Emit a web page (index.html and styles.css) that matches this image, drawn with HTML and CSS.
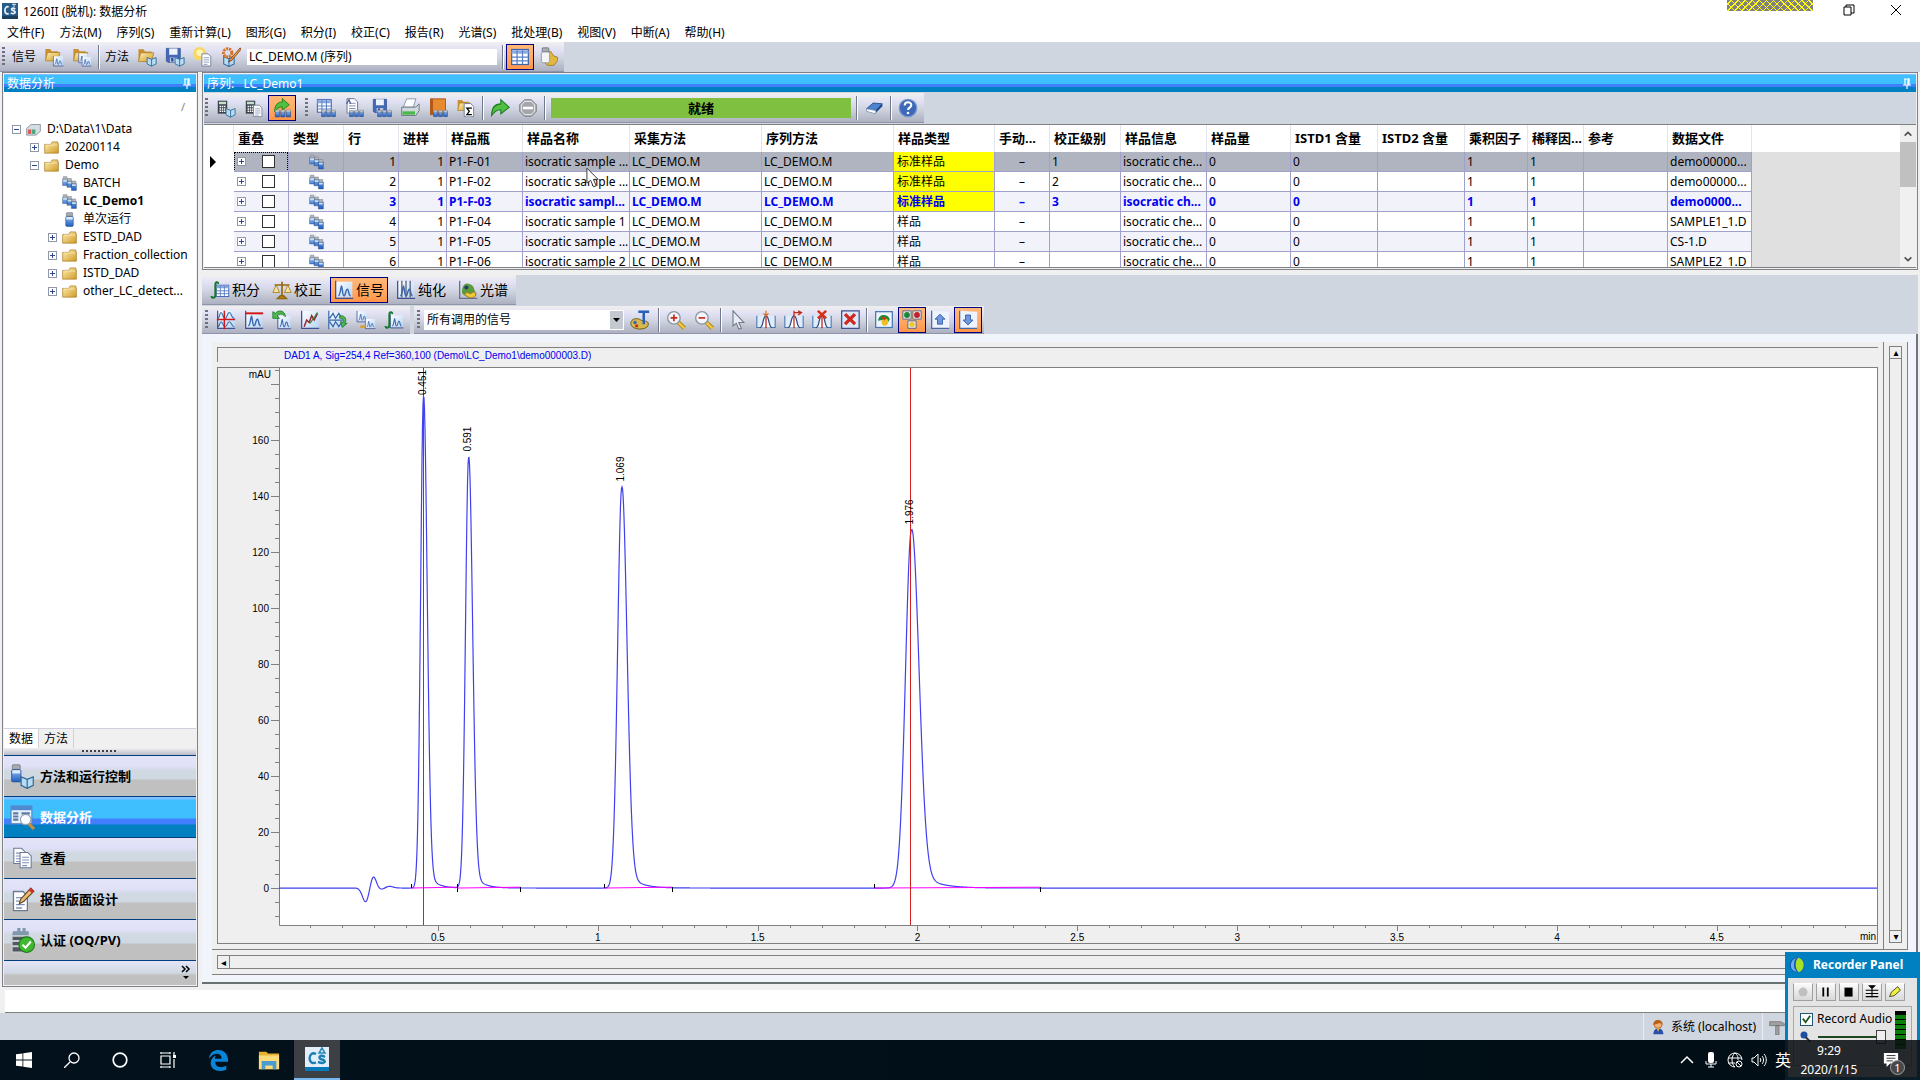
FILE: index.html
```html
<!DOCTYPE html>
<html lang="zh-CN">
  <head>
    <meta charset="UTF-8" />
    <meta name="viewport" content="width=device-width, initial-scale=1.0" />
    <title>1260II (脱机): 数据分析</title>
    <link rel="stylesheet" href="styles.css">
  </head>

  <body>
    <!-- shared icon shapes -->
    <svg class="sprite" aria-hidden="true">
      <defs>
        <linearGradient id="gFolder" x1="0" y1="0" x2="1" y2="1"><stop offset="0" stop-color="#fff0b0" /><stop offset="1" stop-color="#d09a28" /></linearGradient>
        <linearGradient id="gBlue" x1="0" y1="0" x2="0" y2="1"><stop offset="0" stop-color="#8fb8f0" /><stop offset="1" stop-color="#1f5fc0" /></linearGradient>
        <linearGradient id="gChart" x1="0" y1="0" x2="1" y2="1"><stop offset="0" stop-color="#ffffff" /><stop offset="1" stop-color="#b8d4f4" /></linearGradient>
      </defs>
      <symbol id="folder" viewBox="0 0 24 24"><path d="M2 3h7l2 3h9v12H2z" fill="#c89030" /><path d="M2 20 5 8h18l-3 12z" fill="url(#gFolder)" stroke="#a87820" /></symbol>
      <symbol id="folder-plain" viewBox="0 0 24 24"><path d="M1 7h10l2-4h9v3h1v15H1z" fill="url(#gFolder)" stroke="#a07018" /><path d="M3 8h18" stroke="#fff4c8" /></symbol>
      <symbol id="chart" viewBox="0 0 24 24"><rect x="2" y="2" width="20" height="19" fill="url(#gChart)" /><path d="M2 1v21h21" fill="none" stroke="#405090" stroke-width="1.500" /><path d="M5 19c3 0 3-12 4-12s1 12 3 12 2-8 4-8 1 8 4 8" fill="none" stroke="#3868b0" stroke-width="1.700" /></symbol>
      <symbol id="vial" viewBox="0 0 24 24"><rect x="7" y="1" width="10" height="6" rx="1" fill="#a8acb0" stroke="#70757c" /><rect x="6" y="7" width="12" height="16" rx="2" fill="url(#gBlue)" stroke="#30508c" /><path d="M7 8h10v4H7z" fill="#dce8f4" /></symbol>
      <symbol id="vials" viewBox="0 0 24 24"><g stroke="#36558c" stroke-width=".8"><path d="M1 5h8v10H1zM8 8h8v10H8zM15 12h8v11h-8z" fill="url(#gBlue)" /><path d="M2 1h6v4H2zM9 4h6v4H9zM16 8h6v4h-6z" fill="#b4b8ba" stroke="#777c80" /></g><path d="M2 6h6v3H2zM9 9h6v3H9zM16 13h6v3h-6z" fill="#c8dcf0" /></symbol>
      <symbol id="vial-row" viewBox="0 0 24 12"><path d="M1 3h6v8H1zM9 3h6v8H9zM17 3h6v8h-6z" fill="url(#gBlue)" stroke="#2a4c8c" /><path d="M1 1h6v3H1zM9 1h6v3H9zM17 1h6v3h-6z" fill="#cdd3da" stroke="#6a7480" stroke-width=".7" /></symbol>
      <symbol id="book" viewBox="0 0 24 24"><path d="M2 4l10 4 10-4v14l-10 5L2 18z" fill="#b8dcf4" stroke="#2f6a98" stroke-width="2" /><path d="M12 8v15" stroke="#2f6a98" stroke-width="2" /></symbol>
      <symbol id="page" viewBox="0 0 24 24"><path d="M4 1h11l5 5v17H4z" fill="#fff" stroke="#6a7894" stroke-width="1.5" /><path d="M7 8h10M7 12h10M7 16h10M7 20h7" stroke="#8090b8" stroke-width="1.5" /></symbol>
      <symbol id="disk" viewBox="0 0 24 24"><path d="M2 2h20v20H4l-2-2z" fill="#4468b8" stroke="#28448c" /><path d="M6 2h12v9H6z" fill="#eef2fa" /><path d="M7 15h10v7H7z" fill="#b8c4dc" /><path d="M9 16h3v5H9z" fill="#28448c" /></symbol>
      <symbol id="calc" viewBox="0 0 24 24"><rect x="3" y="1" width="16" height="22" fill="#3c4450" /><path d="M5 3h12v4H5z" fill="#c4e0c8" /><path d="M6 11h10M6 15h10M6 19h10" stroke="#fff" stroke-width="2.4" stroke-dasharray="2.6 1.2" /></symbol>
      <symbol id="table" viewBox="0 0 24 24"><rect x="2" y="3" width="20" height="18" fill="#fff" stroke="#3c62b0" stroke-width="1.5" /><path d="M2 4h20v4H2z" fill="#88a8e0" /><path d="M2 12h20M2 16.500h20M8.500 4v17M15 4v17" stroke="#5c80c4" stroke-width="1.5" /></symbol>
      <symbol id="integral" viewBox="0 0 12 24"><path d="M11 4C11 1 7 1 7 5v14c0 4-5 4-5 1" fill="none" stroke="#16782c" stroke-width="2.6" /></symbol>
      <symbol id="swoosh" viewBox="0 0 24 24"><path d="M2 21C2 11 7 7 13 7V2l10 9-10 8v-5c-5 0-8 2-11 7z" fill="#50c040" stroke="#1c7c20" stroke-width="1.3" /></symbol>
      <symbol id="lens" viewBox="0 0 24 24"><path d="M15 15l7 7" stroke="#a87a10" stroke-width="5" /><path d="M15 15l7 7" stroke="#f0c840" stroke-width="3" /><circle cx="9.500" cy="9.500" r="7.500" fill="#f2f6fc" stroke="#8c94a0" stroke-width="1.600" /></symbol>
      <symbol id="pin" viewBox="0 0 12 12"><path d="M3 1h6M4 1v6M8 1v6M7 1v6M2 7h8M6 7v4" fill="none" stroke="#fff" stroke-width="1.200" /></symbol>
      <symbol id="cs" viewBox="0 0 24 24"><rect width="24" height="24" fill="#e4eef8" /><path d="M0 20h24v4H0z" fill="#0878b8" /><path d="M17 1l-3 5h6z" fill="none" stroke="#2888b8" stroke-width="1.500" /><path d="M11 7C3 3 2 19 11 15.500M20 10c-5-3-8 1-3 2.500s3 5-4 2.500" fill="none" stroke="#1880b4" stroke-width="2.400" /></symbol>
      <symbol id="cs-small" viewBox="0 0 24 24"><rect width="24" height="24" fill="#285c88" /><path d="M0 19h24v5H0z" fill="#184060" /><path d="M15 2h6M18 1v5" stroke="#c8e0f0" stroke-width="1.500" /><path d="M10 6C3 3 2 19 10 16M20 9c-5-3-8 1-3 2.500s3 6-4 3.500" fill="none" stroke="#e4f0f8" stroke-width="2.600" /></symbol>
      <symbol id="book-vials" viewBox="0 0 24 24"><path d="M3 1h18v19H3z" fill="#e88a30" stroke="#a04c10" /><path d="M3 1h3v19H3z" fill="#b85818" /><use href="#vial-row" x="6" y="13" width="18" height="11" /></symbol>
    </svg>

    <header class="titlebar">
      <svg class="app-icon"><use href="#cs-small" /></svg>
      <span>1260II (脱机): 数据分析</span>
      <i class="hatch"></i>
      <button class="win-btn" aria-label="还原"><svg viewBox="0 0 12 12"><path d="M1 3h7v8H1zM3 3V1h8v8H8" fill="none" stroke="#000" /></svg></button>
      <button class="win-btn" aria-label="关闭"><svg viewBox="0 0 12 12"><path d="M1 1l10 10M11 1L1 11" fill="none" stroke="#000" /></svg></button>
    </header>

    <nav class="menubar">
      <button>文件(F)</button><button>方法(M)</button><button>序列(S)</button><button>重新计算(L)</button><button>图形(G)</button><button>积分(I)</button><button>校正(C)</button><button>报告(R)</button><button>光谱(S)</button><button>批处理(B)</button><button>视图(V)</button><button>中断(A)</button><button>帮助(H)</button>
    </nav>

    <div class="toolrow main-tools">
      <div class="toolbar">
        <i class="grip"></i>
        <span class="tool-label">信号</span>
        <button class="tool" aria-label="调用信号"><svg viewBox="0 0 24 24"><use href="#folder" width="20" height="20" /><use href="#chart" x="10" y="10" width="14" height="14" /></svg></button>
        <button class="tool" aria-label="叠加信号"><svg viewBox="0 0 24 24"><use href="#folder" width="20" height="20" /><use href="#chart" x="7" y="7" width="13" height="13" /><use href="#chart" x="11" y="11" width="13" height="13" /></svg></button>
        <i class="sep"></i>
        <span class="tool-label">方法</span>
        <button class="tool" aria-label="调用方法"><svg viewBox="0 0 24 24"><use href="#folder" width="21" height="21" /><use href="#book" x="11" y="10" width="13" height="14" /></svg></button>
        <button class="tool" aria-label="保存方法"><svg viewBox="0 0 24 24"><use href="#disk" width="20" height="20" /><use href="#book" x="11" y="10" width="13" height="14" /></svg></button>
        <button class="tool" aria-label="新建方法"><svg viewBox="0 0 24 24"><circle cx="8" cy="8" r="8" fill="#f8d860" /><circle cx="8" cy="7" r="4" fill="#fff4b8" /><use href="#page" x="8" y="7" width="16" height="17" /></svg></button>
        <button class="tool" aria-label="编辑方法"><svg viewBox="0 0 24 24"><use href="#book" x="1" y="9" width="17" height="15" /><circle cx="8" cy="7" r="5" fill="none" stroke="#d87020" stroke-width="3.500" stroke-dasharray="2.500 1" /><path d="M23 1L11 15l-2 3 4-2L24 3z" fill="#f0a840" stroke="#803810" /></svg></button>
        <input class="method-name" type="text" aria-label="当前方法" value="LC_DEMO.M (序列)" />
        <i class="sep"></i>
        <button class="tool active" aria-label="序列表"><svg><use href="#table" /></svg></button>
        <button class="tool" aria-label="单次运行"><svg viewBox="0 0 24 24"><path d="M9 8l6-3 4 6 4 1 1 4-5 6h-8l-5-6z" fill="#e4b840" stroke="#a07818" /><rect x="5" y="1" width="8" height="5" rx="1" fill="#a8acb0" stroke="#70757c" /><rect x="4" y="6" width="10" height="13" rx="2" fill="#f2f4f8" stroke="#8890a0" /></svg></button>
      </div>
    </div>

    <main class="workspace">
      <aside class="panel side">
        <h2 class="panel-title">数据分析<svg><use href="#pin" /></svg></h2>
        <div class="side-path">/</div>
        <ul class="tree">
          <li><button class="twist open" aria-label="折叠"></button><svg viewBox="0 0 24 24"><path d="M1 10l7-6h15v11l-7 6H1z" fill="#d4dce4" stroke="#60707c" /><path d="M3 12h5v7H3z" fill="#e05858" /><path d="M9 12h6v7H9z" fill="#44a878" /></svg>D:\Data\1\Data</li>
          <li class="lv1"><button class="twist" aria-label="展开"></button><svg><use href="#folder-plain" /></svg>20200114</li>
          <li class="lv1"><button class="twist open" aria-label="折叠"></button><svg><use href="#folder-plain" /></svg>Demo</li>
          <li class="lv2 leaf"><svg><use href="#vials" /></svg>BATCH</li>
          <li class="lv2 leaf current"><svg><use href="#vials" /></svg>LC_Demo1</li>
          <li class="lv2 leaf"><svg><use href="#vial" /></svg>单次运行</li>
          <li class="lv2"><button class="twist" aria-label="展开"></button><svg><use href="#folder-plain" /></svg>ESTD_DAD</li>
          <li class="lv2"><button class="twist" aria-label="展开"></button><svg><use href="#folder-plain" /></svg>Fraction_collection</li>
          <li class="lv2"><button class="twist" aria-label="展开"></button><svg><use href="#folder-plain" /></svg>ISTD_DAD</li>
          <li class="lv2"><button class="twist" aria-label="展开"></button><svg><use href="#folder-plain" /></svg>other_LC_detect...</li>
        </ul>
        <div class="side-tabs"><button class="on">数据</button><button>方法</button></div>
        <div class="side-grip"></div>
        <nav class="views">
          <button><svg viewBox="0 0 24 24"><use href="#vial" x="-3" y="0" width="18" height="18" /><use href="#book" x="9" y="10" width="15" height="14" /></svg>方法和运行控制</button>
          <button class="on"><svg viewBox="0 0 24 24"><path d="M1 1h20v17H1z" fill="#e8f0fa" stroke="#5080b8" /><path d="M1 1h20v4H1z" fill="#5088d0" /><path d="M3 8h5M3 11h5M3 14h5M11 8h8" stroke="#5c7ca8" stroke-width="2" /><path d="M18 18l5 5" stroke="#c89038" stroke-width="3" /><circle cx="15" cy="14" r="5" fill="#fff" fill-opacity=".85" stroke="#8ca0b4" /></svg>数据分析</button>
          <button><svg viewBox="0 0 24 24"><use href="#page" x="1" y="0" width="16" height="19" /><use href="#page" x="7" y="4" width="16" height="19" /></svg>查看</button>
          <button><svg viewBox="0 0 24 24"><use href="#page" x="0" y="3" width="20" height="21" /><path d="M20 1l3 3-10 10-4 2 1-4z" fill="#e8bc70" stroke="#5c4020" /><path d="M20 1l3 3-2 2-3-3z" fill="#d83028" /></svg>报告版面设计</button>
          <button><svg viewBox="0 0 24 24"><path d="M3 3h4V0h3v3h2V0h3v3h3v4H2z" fill="#8098ac" /><path d="M2 8h14v4H2zM2 13h14v4H2zM2 18h14v5H2z" fill="#505860" stroke="#c8ccd0" /><circle cx="16" cy="16" r="7.500" fill="#40b830" stroke="#187818" /><path d="M12 16l3 3 5-6" fill="none" stroke="#fff" stroke-width="2" /></svg>认证 (OQ/PV)</button>
          <button class="more" aria-label="配置按钮"><svg viewBox="0 0 12 18"><path d="M2 2l3 3-3 3M6 2l3 3-3 3" fill="none" stroke="#000" stroke-width="1.500" /><path d="M3 12h6l-3 3z" /></svg></button>
        </nav>
      </aside>

      <section class="content">
        <div class="panel sequence">
          <h2 class="panel-title">序列:&nbsp;&nbsp; LC_Demo1<svg><use href="#pin" /></svg></h2>
          <div class="toolrow seq-row">
            <div class="toolbar seq-tools">
              <i class="grip"></i>
              <button class="tool" aria-label="重新处理方法"><svg viewBox="0 0 24 24"><use href="#calc" width="17" height="22" /><use href="#book" x="11" y="10" width="13" height="14" /></svg></button>
              <button class="tool" aria-label="重新处理报告"><svg viewBox="0 0 24 24"><use href="#calc" width="17" height="22" /><use href="#page" x="9" y="7" width="15" height="17" /></svg></button>
              <button class="tool active" aria-label="处理序列"><svg viewBox="0 0 24 24"><use href="#swoosh" x="1" y="-1" width="21" height="20" /><use href="#vial-row" x="3" y="13" width="20" height="11" /></svg></button>
              <i class="grip"></i>
              <button class="tool" aria-label="序列表"><svg viewBox="0 0 24 24"><use href="#table" y="-1" width="20" height="21" /><use href="#vial-row" x="6" y="13" width="18" height="11" /></svg></button>
              <button class="tool" aria-label="序列输出"><svg viewBox="0 0 24 24"><use href="#page" y="0" width="20" height="19" /><path d="M3 7l3-5 2 5" fill="none" stroke="#506090" stroke-width="1.500" /><use href="#vial-row" x="6" y="13" width="18" height="11" /></svg></button>
              <button class="tool" aria-label="保存序列"><svg viewBox="0 0 24 24"><use href="#disk" width="19" height="19" /><use href="#vial-row" x="6" y="13" width="18" height="11" /></svg></button>
              <button class="tool" aria-label="打印"><svg viewBox="0 0 24 24"><path d="M8 1h11l-3 10H4z" fill="#fff" stroke="#7888a0" /><path d="M2 11h17l4-4v8l-4 6H2z" fill="#d0d8dc" stroke="#607078" /><path d="M3 16h15v4H3z" fill="#48b848" /></svg></button>
              <button class="tool" aria-label="序列摘要"><svg><use href="#book-vials" /></svg></button>
              <button class="tool" aria-label="汇总"><svg viewBox="0 0 24 24"><use href="#folder" width="19" height="18" /><use href="#page" x="7" y="5" width="17" height="19" /><path d="M12 11h7v11h-7z" fill="#fff" /><path d="M19 12h-6l3 4-3 4h6" fill="none" stroke="#000" stroke-width="1.500" /></svg></button>
              <i class="sep"></i>
              <button class="tool" aria-label="开始"><svg><use href="#swoosh" /></svg></button>
              <button class="tool" aria-label="停止"><svg viewBox="0 0 24 24"><path d="M8 2h8l6 6v8l-6 6H8l-6-6V8z" fill="#a4a6aa" stroke="#78797c" /><path d="M8 4h8l4 4.500v7L16 20H8l-4-4.500v-7z" fill="none" stroke="#fff" /><path d="M6 12h12" stroke="#fff" stroke-width="3" /></svg></button>
              <i class="sep"></i>
              <output class="state">就绪</output>
              <i class="sep"></i>
              <button class="tool" aria-label="清除"><svg viewBox="0 0 24 24"><path d="M3 13l8-7 11 1-8 8z" fill="#4c84d0" stroke="#1c4884" /><path d="M14 15l8-8v3l-8 8z" fill="#1c4884" /><path d="M3 13l11 2v4L3 16z" fill="#fff" stroke="#8098b8" /></svg></button>
              <i class="sep"></i>
              <button class="tool" aria-label="帮助"><svg viewBox="0 0 24 24"><circle cx="12" cy="12" r="10.500" fill="#3c68b8" stroke="#7c98cc" stroke-width="1.500" /><path d="M8 9c0-5 8-5 8-.5 0 3-4 3-4 6" fill="none" stroke="#fff" stroke-width="2.500" /><circle cx="12" cy="18" r="1.600" fill="#fff" /></svg></button>
            </div>
          </div>
          <div class="grid-box">
            <div class="grid-view">
              <table class="samples">
                <colgroup>
                  <col class="w30" /><col class="w55" /><col class="w55" /><col class="w55" /><col class="w48" /><col class="w76" /><col class="w107" /><col class="w132" /><col class="w132" /><col class="w101" /><col class="w55" /><col class="w71" /><col class="w86" /><col class="w84" /><col class="w87" /><col class="w87" /><col class="w63" /><col class="w56" /><col class="w84" /><col class="w84" />
                </colgroup>
                <thead>
                  <tr><th></th><th>重叠</th><th>类型</th><th>行</th><th>进样</th><th>样品瓶</th><th>样品名称</th><th>采集方法</th><th>序列方法</th><th>样品类型</th><th>手动...</th><th>校正级别</th><th>样品信息</th><th>样品量</th><th>ISTD1 含量</th><th>ISTD2 含量</th><th>乘积因子</th><th>稀释因...</th><th>参考</th><th>数据文件</th></tr>
                </thead>
                <tbody id="sampleRows"></tbody>
              </table>
            </div>
            <div class="vscroll">
              <button aria-label="向上滚动"><svg viewBox="0 0 12 12"><path d="M2 8l4-4 4 4" fill="none" stroke="#505050" stroke-width="2" /></svg></button>
              <i class="thumb"></i>
              <button aria-label="向下滚动"><svg viewBox="0 0 12 12"><path d="M2 4l4 4 4-4" fill="none" stroke="#505050" stroke-width="2" /></svg></button>
            </div>
            <svg class="pointer" viewBox="0 0 14 22"><path d="M1 1v16l4-3 3 7 3-1-3-7h5z" fill="#fff" stroke="#303030" /></svg>
          </div>
        </div>

        <div class="toolrow">
          <div class="toolbar modes">
            <button class="mode"><svg viewBox="0 0 24 24"><use href="#table" x="6" y="3" width="18" height="20" /><use href="#integral" x="0" y="0" width="11" height="24" /></svg>积分</button>
            <button class="mode"><svg viewBox="0 0 24 24"><path d="M12 2v18M3 6h18M7 22h10l-3-3h-4z" fill="#d8a428" stroke="#94680c" stroke-width="2" /><path d="M5 6l-4 9h8zM19 6l-4 9h8z" fill="#f4e4a0" stroke="#a87c18" /></svg>校正</button>
            <button class="mode active"><svg><use href="#chart" /></svg>信号</button>
            <button class="mode"><svg viewBox="0 0 24 24"><use href="#chart" width="24" height="24" /><path d="M7 1v20M12 1v20M17 1v20" stroke="#505c78" stroke-width="1.500" /></svg>纯化</button>
            <button class="mode"><svg viewBox="0 0 24 24"><path d="M2 1v21h21" fill="none" stroke="#607090" stroke-width="1.500" /><path d="M5 16c-1-8 3-14 9-11 6 1 5 8 8 11 0 6-12 7-17 0z" fill="#5a9c3c" /><path d="M8 17c4-5 6 2 9-2 4-2 6 3 3 5-4 3-9 1-12-3z" fill="#ecc838" stroke="#a06820" /><circle cx="10" cy="9" r="2.500" fill="#283c70" /></svg>光谱</button>
          </div>
        </div>

        <div class="toolrow signal-row">
          <div class="toolbar">
            <i class="grip"></i>
            <button class="tool" aria-label="分离信号"><svg viewBox="0 0 24 24"><path d="M2 1h21v21H2z" fill="url(#gChart)" /><path d="M2 10c3 0 2-7 4-7s2 7 5 7 2-7 5-7 2 7 6 7M2 20c3 0 2-6 4-6s2 6 5 6 2-6 5-6 2 6 6 6" fill="none" stroke="#3868b0" stroke-width="1.300" /><path d="M2 1v21h21" fill="none" stroke="#405090" stroke-width="1.500" /><path d="M10 1v22M1 11.500h22" stroke="#d01818" stroke-width="1.800" /></svg></button>
            <button class="tool" aria-label="全谱"><svg viewBox="0 0 24 24"><use href="#chart" width="24" height="24" /><path d="M2 4h21" stroke="#d01818" stroke-width="2.400" /></svg></button>
            <button class="tool" aria-label="还原缩放"><svg viewBox="0 0 24 24"><use href="#chart" x="5" y="6" width="19" height="18" /><path d="M1 2v8h8L6 7c3-3 7-3 10 1 0-7-8-9-12-4z" fill="#50b850" stroke="#187828" /></svg></button>
            <button class="tool" aria-label="比例"><svg viewBox="0 0 24 24"><path d="M2 1h21v21H2z" fill="url(#gChart)" /><path d="M2 1v21h21" fill="none" stroke="#405090" stroke-width="1.500" /><path d="M5 20l3-8 3 3 3-8 3 5 4-8" fill="none" stroke="#902830" stroke-width="1.800" /><path d="M12 16l9-13" stroke="#30882c" stroke-width="1.300" /></svg></button>
            <button class="tool" aria-label="镜像"><svg viewBox="0 0 24 24"><path d="M1 2h16v20H1z" fill="url(#gChart)" /><path d="M1 1v22M1 12h17M2 10l4-6 3 6 4-6 4 6M2 14l4 6 3-6 4 6 4-6" fill="none" stroke="#3868b0" stroke-width="1.500" /><path d="M14 7c7-1 9 5 6 9h3l-6 5-2-7 3 1c2-3 0-5-4-5z" fill="#50b850" stroke="#187828" /></svg></button>
            <button class="tool" aria-label="复制"><svg viewBox="0 0 24 24"><use href="#chart" width="15" height="16" /><use href="#chart" x="10" y="9" width="14" height="15" /><path d="M5 20h6" stroke="#d8a030" stroke-width="3" /></svg></button>
            <button class="tool" aria-label="积分信号"><svg viewBox="0 0 24 24"><use href="#chart" x="6" y="5" width="18" height="18" /><use href="#integral" width="11" height="24" /></svg></button>
          </div>
          <div class="toolbar">
            <i class="grip"></i>
            <select class="signal-select" aria-label="信号选择"><option>所有调用的信号</option></select>
            <button class="tool palette" aria-label="图形属性"><svg viewBox="0 0 24 24"><path d="M1 16c0-6 8-7 12-4 3 2 9 0 9 5 0 8-21 8-21-1z" fill="#d8b848" stroke="#5c4c10" /><circle cx="6" cy="15" r="2" fill="#3060c0" /><circle cx="8" cy="19" r="2" fill="#c03028" /><path d="M10 2h13M16.500 2v15" stroke="#2860b8" stroke-width="3" /></svg></button>
            <i class="sep"></i>
            <button class="tool" aria-label="放大"><svg viewBox="0 0 24 24"><use href="#lens" width="24" height="24" /><path d="M9.500 5.500v8M5.500 9.500h8" stroke="#c82818" stroke-width="2" /></svg></button>
            <button class="tool" aria-label="缩小"><svg viewBox="0 0 24 24"><use href="#lens" width="24" height="24" /><path d="M5.500 9.500h8" stroke="#c82818" stroke-width="2" /></svg></button>
            <i class="sep"></i>
            <button class="tool" aria-label="选择"><svg viewBox="0 0 24 24"><path d="M6 1v18l4-3 3 7 3-1-3-7h6z" fill="#e8ecf4" stroke="#707888" stroke-width="1.300" /></svg></button>
            <button class="tool" aria-label="添加注释"><svg viewBox="0 0 24 24"><path d="M1 7v14h22V7" fill="#e0ecfa" stroke="#4878b0" stroke-width="1.300" /><path d="M5 21c4 0 3-14 7-14s3 14 7 14" fill="#fff" stroke="#304878" stroke-width="1.500" /><path d="M12 5v17" stroke="#c01818" stroke-width="1.500" /><path d="M12 1v5M9 4l3 3 3-3" fill="none" stroke="#d07020" stroke-width="1.500" /></svg></button>
            <button class="tool" aria-label="移动注释"><svg viewBox="0 0 24 24"><path d="M1 7v14h22V7" fill="#e0ecfa" stroke="#4878b0" stroke-width="1.300" /><path d="M5 21c4 0 3-14 7-14s3 14 7 14" fill="#fff" stroke="#304878" stroke-width="1.500" /><path d="M12 1v21M12 3h8M17 1l4 2-4 3" fill="none" stroke="#c02818" stroke-width="1.500" /></svg></button>
            <button class="tool" aria-label="删除注释"><svg viewBox="0 0 24 24"><path d="M1 7v14h22V7" fill="#e0ecfa" stroke="#4878b0" stroke-width="1.300" /><path d="M5 21c4 0 3-14 7-14s3 14 7 14" fill="#fff" stroke="#304878" stroke-width="1.500" /><path d="M12 5v17" stroke="#c01818" stroke-width="1.500" /><path d="M7 1l10 9M17 1L7 10" stroke="#d83018" stroke-width="3" /></svg></button>
            <button class="tool" aria-label="删除全部注释"><svg viewBox="0 0 24 24"><path d="M2 1h21v21H2z" fill="#dce8f8" /><path d="M2 1v21h21V1z" fill="none" stroke="#405090" stroke-width="1.500" /><path d="M6 5l12 12M18 5L6 17" stroke="#d02820" stroke-width="4" /></svg></button>
            <i class="sep"></i>
            <button class="tool" aria-label="等吸收图"><svg viewBox="0 0 24 24"><rect x="2" y="2" width="20" height="19" fill="#eef4fc" stroke="#4878b0" stroke-width="1.500" /><path d="M5 13c0-9 12-9 14-2l-3 5-6-4z" fill="#208c30" /><path d="M9 14c2-6 9-4 8 1s-7 6-8-1z" fill="#f0c020" /><path d="M8 8l7 1-2 4z" fill="#d83020" /></svg></button>
            <button class="tool active" aria-label="三窗口"><svg viewBox="0 0 24 24"><path d="M1 1h10v10H1zM13 1h10v10H13zM7 13h10v9H7z" fill="#e8e4e0" stroke="#4c5c84" /><circle cx="6" cy="6" r="3.500" fill="#188838" /><circle cx="18" cy="6" r="3.500" fill="#c02028" /><circle cx="12" cy="17.500" r="3" fill="#f0c820" /></svg></button>
            <button class="tool" aria-label="上移"><svg viewBox="0 0 24 24"><path d="M2 1v21h21V2z" fill="#eef4ff" /><path d="M2 1v21h21" fill="none" stroke="#4868a8" stroke-width="1.500" /><path d="M12 5l6 6h-3v6H9v-6H6z" fill="#6c98e0" stroke="#30549c" /></svg></button>
            <button class="tool active" aria-label="下移"><svg viewBox="0 0 24 24"><path d="M2 1v21h21V2z" fill="#eef4ff" /><path d="M2 1v21h21" fill="none" stroke="#4868a8" stroke-width="1.500" /><path d="M12 18l6-6h-3V6H9v6H6z" fill="#6c98e0" stroke="#30549c" /></svg></button>
          </div>
        </div>

        <div class="graph">
          <div class="graph-main">
            <div class="signal-name">DAD1 A, Sig=254,4 Ref=360,100 (Demo\LC_Demo1\demo000003.D)</div>
            <div class="plot" id="plot"></div>
          </div>
          <div class="graph-vscroll">
            <div class="bar"><button aria-label="向上">&#9652;</button><button aria-label="向下">&#9662;</button></div>
          </div>
          <div class="graph-hscroll">
            <div class="bar"><button aria-label="向左">&#9666;</button></div>
          </div>
        </div>
      </section>
    </main>

    <div class="message-line"></div>
    <footer class="statusbar">
      <div class="status-item"><svg viewBox="0 0 24 24"><path d="M5 23c0-12 15-12 15 0z" fill="#2850a8" /><circle cx="12" cy="8" r="6" fill="#f0b070" stroke="#a04c10" /><path d="M5 9c-1-9 14-10 14 0l-4-3z" fill="#b86018" /><path d="M10 14l2 5 3-5z" fill="#e8b030" /></svg>系统 (localhost)</div>
      <div class="status-item"><svg viewBox="0 0 24 24"><path d="M1 4h16l6 3v3H1zM10 10h5v14h-5z" fill="#a0a0a0" stroke="#686868" /></svg></div>
    </footer>

    <div class="recorder">
      <h3><svg viewBox="0 0 24 24"><circle cx="12" cy="12" r="11" fill="#1850b0" /><path d="M14 1c10 2 11 18 1 22-6-3-7-18-1-22z" fill="#a8e028" /><path d="M11 2c-5 4-5 16 1 20-12 0-12-18-1-20z" fill="#68b0f0" /></svg>Recorder Panel</h3>
      <div class="rec-body">
        <div class="rec-buttons">
          <button aria-label="录制"><svg viewBox="0 0 20 18"><circle cx="10" cy="9" r="5" fill="#c0c0c0" /></svg></button>
          <button aria-label="暂停"><svg viewBox="0 0 20 18"><path d="M6 4h2v10H6zM11 4h2v10h-2z" /></svg></button>
          <button aria-label="停止"><svg viewBox="0 0 20 18"><path d="M5 4h9v10H5z" /></svg></button>
          <button aria-label="标记"><svg viewBox="0 0 20 18"><path d="M3 7h14M3 14h14M3 10.500h14M10 4v11M7 2h6l-3 3z" stroke="#000" stroke-width="1.200" /></svg></button>
          <button aria-label="高亮"><svg viewBox="0 0 20 18"><path d="M4 14l2-5 7-6 3 4-7 6z" fill="#f0f040" stroke="#404020" /></svg></button>
        </div>
        <fieldset class="rec-audio">
          <div class="rec-left">
            <label><input type="checkbox" checked />Record Audio</label>
            <div class="volume"><svg viewBox="0 0 24 24"><circle cx="8" cy="8" r="7" fill="#1c50a0" /><path d="M11 12l10 10" stroke="#303840" stroke-width="4" /></svg><input type="range" aria-label="音量" min="0" max="100" value="100" /></div>
          </div>
          <i class="meter"></i>
        </fieldset>
      </div>
    </div>

    <div class="taskbar">
      <button aria-label="开始"><svg viewBox="0 0 16 16"><path d="M0 2.300L6.500 1.400V7.600H0zM7.300 1.300L16 0v7.600H7.300zM0 8.400h6.500v6.200L0 13.700zM7.300 8.400H16V16l-8.700-1.300z" fill="#fff" /></svg></button>
      <button aria-label="搜索"><svg viewBox="0 0 16 16"><circle cx="10" cy="6" r="5" fill="none" stroke="#fff" stroke-width="1.300" /><path d="M6 10l-6 6" stroke="#fff" stroke-width="1.300" /></svg></button>
      <button aria-label="Cortana"><svg viewBox="0 0 16 16"><circle cx="8" cy="8" r="6.800" fill="none" stroke="#fff" stroke-width="1.700" /></svg></button>
      <button aria-label="任务视图"><svg viewBox="0 0 16 16"><path d="M1 4h9v8H1zM1 2V0M1 1h9M10 0v2M1 16v-2M1 15h9M10 16v-2M14 0v3M14 7v9" fill="none" stroke="#fff" stroke-width="1.200" /><path d="M13 3h3v3h-3z" fill="#fff" /></svg></button>
      <button class="big" aria-label="Edge"><svg viewBox="0 0 24 24"><path d="M2 11C3 3 8 1 12.500 1 19 1 23 6 23 12v2H9c0 7 8 7 12 4v4.500C13 26 4 23 4 15.500 4 11 7 8 10 7c-1 1-1.500 2-1.500 3.500H16C16 3 6 4 2 11z" fill="#0a84d8" /></svg></button>
      <button class="big" aria-label="文件资源管理器"><svg viewBox="0 0 24 24"><path d="M1 3h8l2 2h12v17H1z" fill="#e8b030" /><path d="M1 7h22v15H1z" fill="#fbdc78" /><path d="M4 13h16v9h-4v-4H8v4H4z" fill="#4c9cd4" /></svg></button>
      <button class="big running" aria-label="ChemStation"><svg><use href="#cs" /></svg></button>
      <div class="tray">
        <svg viewBox="0 0 16 16"><path d="M2 11l6-6 6 6" fill="none" stroke="#fff" stroke-width="1.500" /></svg>
        <svg viewBox="0 0 16 16"><rect x="5" y="0" width="6" height="11" rx="2" fill="#fff" /><path d="M3 9v3h10V9M8 12v3M5 15h6" fill="none" stroke="#fff" /></svg>
        <svg viewBox="0 0 16 16"><path d="M8 1a7 7 0 100 14M8 1a7 7 0 017 7M8 1c-4 3-4 11 0 14M8 1c3 2 3 5 3 7M1 6h14M1 11h7" fill="none" stroke="#fff" /><circle cx="12" cy="12" r="3" fill="none" stroke="#fff" /><path d="M10 10l4 4" stroke="#fff" /></svg>
        <svg viewBox="0 0 16 16"><path d="M1 6h2l4-4v12l-4-4H1zM9 6c1 1 1 3 0 4M11 4c2 2 2 6 0 8M13 2c3 3 3 9 0 12" fill="none" stroke="#fff" /></svg>
        <span class="ime">英</span>
        <time class="clock">9:29<br />2020/1/15</time>
        <button class="notice" aria-label="通知"><svg viewBox="0 0 18 18"><path d="M1 1h16v12H8l-4 4v-4H1z" fill="#fff" /><path d="M4 4h10M4 7h10M4 10h7" stroke="#222" /></svg><b>1</b></button>
      </div>
    </div>

    <script src="script.js"></script>
  </body>
</html>
```

FILE: styles.css
```css
* {
  box-sizing: border-box;
}
body {
  margin: 0;
  height: 100vh;
  display: flex;
  flex-direction: column;
  position: relative;
  overflow: hidden;
  background: #f0f0f0;
  color: #000;
  font: 12px/16px "Noto Sans", "Noto Sans CJK SC", sans-serif;
}
button,
input,
select {
  font: inherit;
  color: inherit;
}
button {
  padding: 0;
  border: 0;
  background: none;
}
i {
  flex: none;
}
.sprite {
  position: absolute;
  width: 0;
  height: 0;
}

/* title and menus */
.titlebar {
  display: flex;
  height: 22px;
  padding: 0 1px 0 2px;
  background: #fff;
  line-height: 24px;
}
.app-icon {
  width: 16px;
  height: 16px;
  margin: 3px 5px 0 0;
}
.hatch {
  width: 86px;
  height: 11px;
  margin-left: auto;
  margin-right: 12px;
  background:
    repeating-linear-gradient(45deg, #ff0 0 1px, transparent 1px 5px),
    repeating-linear-gradient(-45deg, #ff0 0 1px, transparent 1px 5px),
    #808080;
}
.win-btn {
  width: 47px;
  height: 20px;
  line-height: 0;
}
.win-btn svg {
  width: 12px;
  height: 12px;
}
.menubar {
  display: flex;
  gap: 15px;
  height: 20px;
  padding: 1px 0 0 7px;
  background: #fff;
}
.menubar button {
  height: 20px;
  white-space: nowrap;
}

/* toolbars */
.toolrow {
  display: flex;
  flex: none;
  height: 31px;
  background: #d0d6e0;
}
.main-tools {
  height: 30px;
}
.seq-row {
  height: 32px;
  padding-top: 1px;
}
.toolbar {
  display: flex;
  align-items: center;
  height: 30px;
  padding: 0 2px;
  background: linear-gradient(#f0f0f0, #e0e0f4 30%, #d0d4e0 55%, #acb0c0);
  border-bottom: 1px solid #9094a8;
}
.grip {
  width: 3px;
  height: 19px;
  margin: 0 4px 0 0;
  background: repeating-linear-gradient(#707078 0 2px, transparent 2px 4px);
}
.sep {
  width: 2px;
  height: 24px;
  margin: 0 2px;
  border-left: 1px solid #70788c;
  border-right: 1px solid #fff;
}
.tool-label {
  margin: 0 4px 0 3px;
}
.tool {
  display: flex;
  align-items: center;
  justify-content: center;
  flex: none;
  width: 28px;
  height: 26px;
}
.tool svg {
  width: 20px;
  height: 20px;
}
.active {
  border: 1px solid #000080;
  background: linear-gradient(#ffb878, #ffa860 60%, #ff9448);
}
.method-name {
  width: 250px;
  height: 16px;
  margin: 0 3px 0 2px;
  padding: 0 2px;
  border: 0;
  background: #fff;
}

/* workspace */
.workspace {
  display: flex;
  flex: 1;
  min-height: 0;
  gap: 4px;
  padding: 0 2px;
}
.panel {
  border: 1px solid #808088;
  padding: 1px;
  background: #f0f0f0;
}
.panel-title {
  display: flex;
  align-items: center;
  justify-content: space-between;
  height: 18px;
  margin: 0;
  padding: 2px 3px 0;
  background: linear-gradient(#80c0ff 1px, #40bfff 1px 10px, #4080ff 10px 13px, #0080c0 13px);
  color: #fff;
  font-weight: normal;
  font-size: 12px;
}
.panel-title svg {
  width: 12px;
  height: 12px;
}
.side {
  display: flex;
  flex-direction: column;
  width: 196px;
}
.side-path {
  padding: 7px 11px 3px 0;
  background: #fff;
  text-align: right;
  color: #808080;
  font-size: 11px;
}
.tree {
  flex: 1;
  margin: 0;
  padding: 2px 0 0 8px;
  list-style: none;
  background: #fff;
  border-bottom: 1px solid #d0d0e0;
}
.tree li {
  display: flex;
  align-items: center;
  gap: 5px;
  height: 18px;
  white-space: nowrap;
}
.tree svg {
  width: 15px;
  height: 15px;
  margin-right: 1px;
}
.tree .lv1 {
  padding-left: 18px;
}
.tree .lv2 {
  padding-left: 36px;
}
.tree .leaf {
  padding-left: 50px;
}
.tree .current {
  font-weight: bold;
}
.twist {
  flex: none;
  width: 9px;
  height: 9px;
  border: 1px solid #9098a8;
  background:
    linear-gradient(#304890, #304890) center / 5px 1px no-repeat,
    linear-gradient(#304890, #304890) center / 1px 5px no-repeat,
    #fff;
}
.twist.open {
  background: linear-gradient(#304890, #304890) center / 5px 1px no-repeat, #fff;
}
.side-tabs {
  display: flex;
}
.side-tabs button {
  height: 19px;
  padding: 0 5px;
  border-right: 1px solid #d0d0d8;
}
.side-tabs .on {
  background: #fff;
}
.side-grip {
  height: 8px;
  background:
    repeating-linear-gradient(90deg, #404048 0 2px, transparent 2px 4px) center 2px / 36px 2px no-repeat,
    linear-gradient(#f0f0f0, #b8bcc8);
  border-bottom: 1px solid #003f7f;
}
.views button {
  display: flex;
  align-items: center;
  gap: 5px;
  width: 100%;
  height: 41px;
  padding-left: 6px;
  border-bottom: 1px solid #003f7f;
  background: linear-gradient(#e4e4f8, #e0e0f8 10px, #d0d8e2 15px 23px, #c0c0c0 24px);
  font-weight: bold;
  font-size: 13px;
}
.views svg {
  width: 25px;
  height: 25px;
}
.views .on {
  background: linear-gradient(#80c0ff 2px, #40bfff 3px 21px, #4080ff 22px 27px, #0080c0 28px);
  color: #fff;
}
.views .more {
  height: 24px;
  justify-content: flex-end;
  padding-right: 4px;
  border-bottom: 0;
  background: linear-gradient(#e4e4f8, #d0d8e2 50%, #c0c0c0 60%);
}
.views .more svg {
  width: 12px;
  height: 18px;
}

/* sequence table */
.content {
  display: flex;
  flex-direction: column;
  flex: 1;
  min-width: 0;
  padding-bottom: 3px;
}
.sequence {
  flex: none;
  margin-bottom: 5px;
}
.seq-tools {
  padding-left: 1px;
}
.seq-tools .active + .grip {
  margin-left: 9px;
}
.state {
  width: 300px;
  height: 20px;
  margin: 0 3px;
  background: #80c040;
  font-weight: bold;
  font-size: 13px;
  line-height: 20px;
  text-align: center;
}
.grid-box {
  position: relative;
  display: flex;
  height: 144px;
  border-top: 1px solid #808080;
  border-bottom: 1px solid #808080;
  background: #e0e0e0;
}
.grid-view {
  flex: 1;
  overflow: hidden;
  background: linear-gradient(#fff 27px, #e0e0e0 27px);
}
.samples {
  width: 1548px;
  table-layout: fixed;
  border-collapse: separate;
  border-spacing: 0;
}
.samples th,
.samples td {
  overflow: hidden;
  padding: 0 2px;
  text-align: left;
  white-space: nowrap;
}
.samples th {
  height: 27px;
  padding: 0 2px 2px 4px;
  border-right: 1px solid #e4e4ec;
  background: #fff;
  font-size: 13px;
}
.samples td {
  height: 20px;
  border-right: 1px solid #a0a0cc;
  border-bottom: 1px solid #a0a0cc;
}
.samples td:first-child {
  border-color: #fff;
  background: #fff;
}
.samples tbody tr {
  background: #fff;
}
.samples tbody tr:nth-child(odd) {
  background: #f2f3fa;
}
.samples tbody tr.selected {
  background: #b0b4c0;
}
.samples .loaded {
  color: #0000f0;
  font-weight: bold;
}
.samples .standard {
  background: #ff0;
}
.samples .type {
  padding-left: 3px;
}
.samples .num {
  text-align: right;
}
.samples .mid {
  text-align: center;
}
.samples td svg {
  display: block;
  width: 15px;
  height: 16px;
  margin: 0 auto;
}
.samples td:first-child svg {
  width: 8px;
  height: 12px;
  margin-left: 3px;
}
.overlay-cell {
  display: flex;
  align-items: center;
  gap: 16px;
  height: 16px;
  padding-left: 1px;
}
.selected .overlay-cell {
  outline: 1px dotted #000;
  outline-offset: 1px;
}
.overlay-cell input {
  appearance: none;
  width: 13px;
  height: 13px;
  margin: 0;
  border: 1px solid #303030;
  background: #fff;
}
.w30 { width: 30px; }
.w48 { width: 48px; }
.w55 { width: 55px; }
.w56 { width: 56px; }
.w63 { width: 63px; }
.w71 { width: 71px; }
.w76 { width: 76px; }
.w84 { width: 84px; }
.w86 { width: 86px; }
.w87 { width: 87px; }
.w101 { width: 101px; }
.w107 { width: 107px; }
.w132 { width: 132px; }
.vscroll {
  display: flex;
  flex-direction: column;
  width: 16px;
  background: #f0f0f0;
}
.vscroll button {
  height: 17px;
  line-height: 0;
}
.vscroll svg {
  width: 10px;
  height: 10px;
}
.vscroll .thumb {
  height: 45px;
  margin-bottom: auto;
  background: #c0c0c0;
}
.pointer {
  position: absolute;
  left: 382px;
  top: 42px;
  width: 13px;
  height: 21px;
}

/* graph tabs */
.modes {
  gap: 10px;
  padding: 0 7px;
}
.mode {
  display: flex;
  align-items: center;
  gap: 2px;
  height: 26px;
  border: 1px solid transparent;
  font-size: 14px;
}
.mode.active {
  border-color: #000080;
  padding: 0 3px;
  margin: 0 -3px;
}
.mode svg {
  width: 20px;
  height: 20px;
}
.signal-row {
  gap: 4px;
  height: 28px;
}
.signal-row .toolbar {
  height: 28px;
  padding-left: 3px;
}
.signal-select {
  appearance: none;
  width: 200px;
  height: 20px;
  padding: 0 3px;
  border: 0;
  border-radius: 0;
  background: url("data:image/svg+xml,%3Csvg xmlns='http://www.w3.org/2000/svg' width='14' height='20'%3E%3Cpath d='M0 1h13v18H0z' fill='%23c4c8d0'/%3E%3Cpath d='M3 8h7l-3.500 4z'/%3E%3C/svg%3E") right center no-repeat #fff;
}
.palette {
  margin: 0 2px;
}

/* chromatogram */
.graph {
  display: grid;
  grid-template-columns: 1fr 24px;
  grid-template-rows: 1fr auto;
  flex: 1;
  min-height: 0;
  padding: 8px 8px 7px 10px;
  background: #f1f4fa;
  border-right: 2px solid #70757c;
  border-bottom: 2px solid #687070;
}
.graph-main {
  display: flex;
  flex-direction: column;
  gap: 5px;
  min-width: 0;
  padding: 5px;
  border-right: 1px solid #808080;
  border-bottom: 1px solid #808080;
  background: #efefef;
}
.signal-name {
  height: 15px;
  padding-left: 66px;
  border-top: 1px solid #808080;
  border-left: 1px solid #808080;
  color: #0000f0;
  font: 10px/15px "Liberation Sans", sans-serif;
}
.plot {
  flex: 1;
  min-height: 0;
  border: 1px solid #808080;
}
.plot svg {
  display: block;
}
.plot text {
  font: 10px "Liberation Sans", sans-serif;
}
.graph-vscroll {
  padding: 4px 5px 6px;
  background: #efefef;
  border-right: 1px solid #808080;
  border-bottom: 1px solid #808080;
}
.graph-hscroll {
  grid-column: 1 / 3;
  padding: 5px;
  background: #efefef;
  border-bottom: 1px solid #808080;
}
.bar {
  display: flex;
  border: 1px solid #808080;
}
.graph-vscroll .bar {
  flex-direction: column;
  justify-content: space-between;
  height: 100%;
}
.bar button {
  width: 12px;
  height: 12px;
  font: 10px/11px "DejaVu Sans", sans-serif;
}
.graph-vscroll button:first-child {
  border-bottom: 1px solid #808080;
}
.graph-vscroll button:last-child {
  border-top: 1px solid #808080;
}
.graph-hscroll button {
  border-right: 1px solid #808080;
}

/* message line and status */
.message-line {
  height: 23px;
  margin: 3px 0 0 5px;
  background: #fff;
  border-bottom: 1px solid #808080;
}
.statusbar {
  display: flex;
  justify-content: flex-end;
  height: 27px;
  padding-right: 129px;
  background: #d0d6e0;
}
.status-item {
  display: flex;
  align-items: center;
  gap: 5px;
  padding: 0 6px;
  border-left: 1px solid #e8ecf4;
}
.status-item svg {
  width: 16px;
  height: 16px;
}

/* recorder overlay */
.recorder {
  position: absolute;
  right: 0;
  bottom: 0;
  width: 135px;
  height: 128px;
  padding: 0 3px;
  background: #0080c0;
}
.recorder h3 {
  display: flex;
  align-items: center;
  gap: 8px;
  height: 26px;
  margin: 0;
  padding-left: 1px;
  color: #fff;
  font-size: 12px;
}
.recorder h3 svg {
  width: 16px;
  height: 16px;
}
.rec-body {
  height: 99px;
  padding: 5px;
  background: #e4e4e4;
}
.rec-buttons {
  display: flex;
  gap: 3px;
}
.rec-buttons button {
  width: 20px;
  height: 18px;
  border: 1px solid #a0a0a0;
  border-top-color: #fff;
  background: linear-gradient(#fafafa, #d8d8d8);
  line-height: 0;
}
.rec-audio {
  display: flex;
  justify-content: space-between;
  height: 60px;
  margin: 5px 0 0;
  padding: 4px 5px 4px 6px;
  border: 1px solid #a8a8a8;
}
.rec-audio label {
  display: flex;
  align-items: center;
  gap: 4px;
  white-space: nowrap;
}
.rec-audio [type="checkbox"] {
  width: 13px;
  height: 13px;
  margin: 0;
  appearance: none;
  border: 1px solid #205878;
  background: url("data:image/svg+xml,%3Csvg xmlns='http://www.w3.org/2000/svg' viewBox='0 0 12 12'%3E%3Cpath d='M2 5l3 4 5-7' fill='none' stroke='%23205820' stroke-width='2'/%3E%3C/svg%3E") #fff;
}
.volume {
  display: flex;
  align-items: center;
  gap: 6px;
  padding-top: 2px;
}
.volume svg {
  width: 12px;
  height: 12px;
}
.volume input {
  appearance: none;
  width: 68px;
  height: 16px;
  margin: 0;
  background: linear-gradient(#204820, #204820) center / 100% 2px no-repeat;
}
.volume input::-webkit-slider-thumb {
  appearance: none;
  width: 10px;
  height: 14px;
  border: 1px solid #404040;
  background: #eee;
}
.meter {
  width: 11px;
  height: 38px;
  background: repeating-linear-gradient(#000 0 1px, #088008 1px 5px);
  border-top: 3px solid #000;
}

/* taskbar */
.taskbar {
  position: relative;
  display: flex;
  align-items: center;
  flex: none;
  height: 40px;
  color: #fff;
  background: linear-gradient(90deg, #02111b, #010e16 calc(100% - 135px), rgba(10, 14, 18, 0.88) calc(100% - 135px));
}
.taskbar button {
  display: flex;
  align-items: center;
  justify-content: center;
  width: 48px;
  height: 40px;
}
.taskbar button svg {
  width: 16px;
  height: 16px;
}
.taskbar .big {
  width: 51px;
}
.taskbar .big svg {
  width: 22px;
  height: 22px;
}
.taskbar .running {
  width: 46px;
  background: #3c4044;
  border-bottom: 2px solid #78b8f0;
}
.taskbar .running svg {
  width: 24px;
  height: 24px;
}
.tray {
  display: flex;
  align-items: center;
  gap: 8px;
  margin-left: auto;
}
.tray > svg {
  width: 16px;
  height: 16px;
}
.ime {
  font-size: 16px;
}
.clock {
  width: 60px;
  font-size: 12px;
  line-height: 19px;
  text-align: center;
}
.taskbar .notice {
  position: relative;
  width: 64px;
  margin: 0 -3px 0 -8px;
}
.notice b {
  position: absolute;
  left: 31px;
  top: 20px;
  width: 15px;
  height: 15px;
  border: 1px solid #a0a0a0;
  border-radius: 50%;
  background: #484848;
  font-size: 11px;
  font-weight: normal;
  line-height: 13px;
}
```

FILE: script.js
```js
const rows = [
  { vial: 'P1-F-01', name: 'isocratic sample ...', type: '标准样品', level: '1', info: 'isocratic che...', file: 'demo00000...' },
  { vial: 'P1-F-02', name: 'isocratic sample ...', type: '标准样品', level: '2', info: 'isocratic che...', file: 'demo00000...' },
  { vial: 'P1-F-03', name: 'isocratic sampl...', type: '标准样品', level: '3', info: 'isocratic ch...', file: 'demo0000...' },
  { vial: 'P1-F-04', name: 'isocratic sample 1', type: '样品', level: '', info: 'isocratic che...', file: 'SAMPLE1_1.D' },
  { vial: 'P1-F-05', name: 'isocratic sample ...', type: '样品', level: '', info: 'isocratic che...', file: 'CS-1.D' },
  { vial: 'P1-F-06', name: 'isocratic sample 2', type: '样品', level: '', info: 'isocratic che...', file: 'SAMPLE2_1.D' }
];
const rowClass = { 0: 'selected', 2: 'loaded' };

document.getElementById('sampleRows').innerHTML = rows.map((r, i) => `
  <tr class="${rowClass[i] || ''}">
    <td>${i === 0 ? '<svg viewBox="0 0 8 12"><path d="M1 0l6 6-6 6z"/></svg>' : ''}</td>
    <td><div class="overlay-cell"><button class="twist" aria-label="展开"></button><input type="checkbox" aria-label="重叠 ${i + 1}"></div></td>
    <td><svg><use href="#vials"/></svg></td>
    <td class="num">${i + 1}</td>
    <td class="num">1</td>
    <td>${r.vial}</td>
    <td>${r.name}</td>
    <td>LC_DEMO.M</td>
    <td>LC_DEMO.M</td>
    <td class="type ${r.level ? 'standard' : ''}">${r.type}</td>
    <td class="mid">–</td>
    <td>${r.level}</td>
    <td>${r.info}</td>
    <td>0</td>
    <td>0</td>
    <td></td>
    <td>1</td>
    <td>1</td>
    <td></td>
    <td>${r.file}</td>
  </tr>`).join('');

// chromatogram: time in min, signal in mAU
const peaks = [
  { t: 0.452, h: 175.5, left: 0.009, right: 0.0112, label: '0.451' },
  { t: 0.593, h: 153.7, left: 0.0097, right: 0.0122, label: '0.591' },
  { t: 1.072, h: 143, left: 0.0128, right: 0.016, label: '1.069' },
  { t: 1.978, h: 127.7, left: 0.0185, right: 0.023, label: '1.976' }
];
const baselines = [
  { from: 0.413, to: 0.557 },
  { from: 0.557, to: 0.755 },
  { from: 1.015, to: 1.23 },
  { from: 1.861, to: 2.38 }
];
const cursors = [0.451, 1.974];
const yMin = -13.2;
const yMax = 185.7;
const tMax = 4.998;

function gauss(t, center, sigma) {
  return Math.exp(-((t - center) ** 2) / (2 * sigma * sigma));
}

function signal(t) {
  let y = -5 * gauss(t, 0.271, 0.01) + 4.2 * gauss(t, 0.295, 0.009) - 0.5 * gauss(t, 0.32, 0.01) + 0.6 * gauss(t, 0.345, 0.012);
  peaks.forEach(p => {
    const d = t - p.t;
    y += p.h * gauss(t, p.t, d < 0 ? p.left : p.right);
    if (d > 0) y += 9 * (1 - Math.exp(-d / p.right)) * Math.exp(-d / (p.right * 2.2));
  });
  return y;
}

function drawPlot() {
  const box = document.getElementById('plot');
  box.innerHTML = '';
  const w = box.clientWidth;
  const h = box.clientHeight;
  const left = 61;
  const bottom = h - 18;
  const x = t => left + (t / tMax) * (w - left);
  const y = v => bottom - ((v - yMin) / (yMax - yMin)) * bottom;
  let out = `<rect x="${left}" width="${w - left}" height="${bottom}" fill="#fff"/>`;

  let axis = `M${left + 0.5} 0V${bottom + 0.5}H${w}`;
  for (let v = -10; v <= 185; v += 5) {
    axis += `M${left} ${Math.round(y(v)) + 0.5}h${v % 20 ? -4 : -8}`;
    if (v % 20 === 0 && v < 180) out += `<text x="${left - 10}" y="${Math.round(y(v)) + 4}" text-anchor="end">${v}</text>`;
  }
  for (let i = 1; i < 50; i++) {
    axis += `M${Math.round(x(i / 10)) - 0.5} ${bottom}v${i % 5 ? 3 : 6}`;
    if (i % 5 === 0) out += `<text x="${x(i / 10) - 1}" y="${bottom + 16}" text-anchor="middle">${i / 10}</text>`;
  }
  out += `<path d="${axis}" fill="none" stroke="#808080"/>`;
  out += `<text x="${left - 8}" y="10" text-anchor="end">mAU</text>`;
  out += `<text x="${w - 1}" y="${bottom + 15}" text-anchor="end">min</text>`;

  let line = '';
  for (let px = left; px <= w; px += 0.5) {
    const t = ((px - left) / (w - left)) * tMax;
    line += `${line ? 'L' : 'M'}${px} ${y(signal(t)).toFixed(2)}`;
  }
  out += `<path d="${line}" fill="none" stroke="#4040f0" stroke-width="1.2"/>`;

  baselines.forEach(b => {
    out += `<path d="M${x(b.from)} ${y(0)}L${x(b.to)} ${y(0.3)}" stroke="#f0f"/>`;
    out += `<path d="M${Math.round(x(b.from)) + 0.5} ${y(0) - 4}v4M${Math.round(x(b.to)) + 0.5} ${y(0) - 1}v5" stroke="#000"/>`;
  });
  cursors.forEach(t => {
    out += `<path d="M${Math.round(x(t)) + 0.5} 0V${bottom}" stroke="#d02020"/>`;
  });
  peaks.forEach(p => {
    const top = Math.max(y(p.h) - 6, 27);
    out += `<text transform="translate(${x(p.t) + 2} ${top}) rotate(-90)">${p.label}</text>`;
  });
  box.innerHTML = `<svg width="${w}" height="${h}">${out}</svg>`;
}

drawPlot();
window.addEventListener('resize', drawPlot);
```
